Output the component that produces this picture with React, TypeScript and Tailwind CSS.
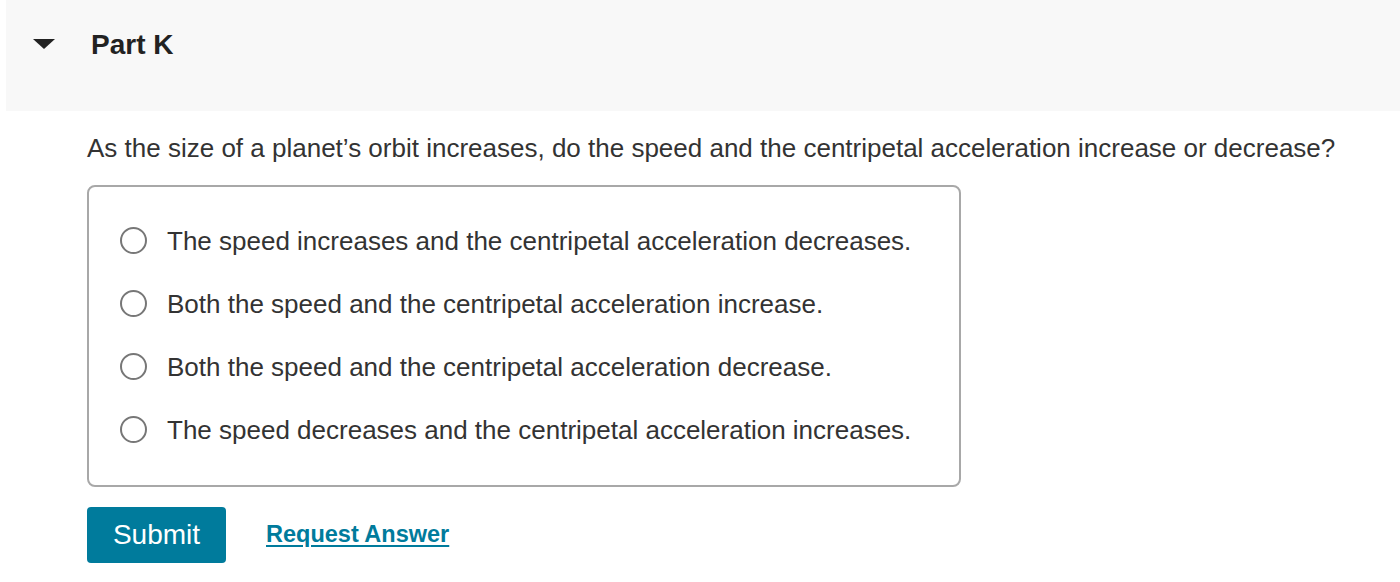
import React, { useState } from 'react';

const options = [
  'The speed increases and the centripetal acceleration decreases.',
  'Both the speed and the centripetal acceleration increase.',
  'Both the speed and the centripetal acceleration decrease.',
  'The speed decreases and the centripetal acceleration increases.',
];

export default function App() {
  const [selected, setSelected] = useState<number | null>(null);

  return (
    <div className="min-h-[582px] bg-white font-['Liberation_Sans',Arial,sans-serif] text-[#333]">
      <div className="ml-[6px] h-[111px] bg-[#f8f8f8] flex items-start pt-[28px]">
        <div className="w-[85px] pl-[27px] pt-[11px]">
          <svg width="22" height="10" viewBox="0 0 22 10" className="block">
            <path d="M0 0 H22 L11 10 Z" fill="#222" />
          </svg>
        </div>
        <h2 className="text-[28px] leading-[34px] font-bold text-[#222]">Part K</h2>
      </div>

      <div className="pl-[87px] pt-[20px]">
        <p className="text-[26px] leading-[34px]">
          As the size of a planet’s orbit increases, do the speed and the centripetal acceleration increase or decrease?
        </p>

        <div className="mt-[20px] w-[874px] h-[302px] border-2 border-[#a8a8a8] rounded-[8px] pt-[22px] pl-[31px]">
          {options.map((opt, i) => (
            <label key={i} className="flex items-center h-[63px] cursor-pointer">
              <span
                onClick={() => setSelected(i)}
                className="w-[27px] h-[27px] rounded-full border-2 border-[#777] flex items-center justify-center shrink-0"
              >
                {selected === i && <span className="w-[13px] h-[13px] rounded-full bg-[#007b9c]" />}
              </span>
              <span className="ml-[20px] text-[26px] leading-[34px]">{opt}</span>
            </label>
          ))}
        </div>

        <div className="mt-[20px] flex items-center">
          <button className="w-[139px] h-[56px] bg-[#007b9c] rounded-[4px] text-white text-[28px]">
            Submit
          </button>
          <a href="#" className="ml-[40px] text-[23.5px] font-bold text-[#007b9c] underline underline-offset-[3px]">
            Request Answer
          </a>
        </div>
      </div>
    </div>
  );
}
